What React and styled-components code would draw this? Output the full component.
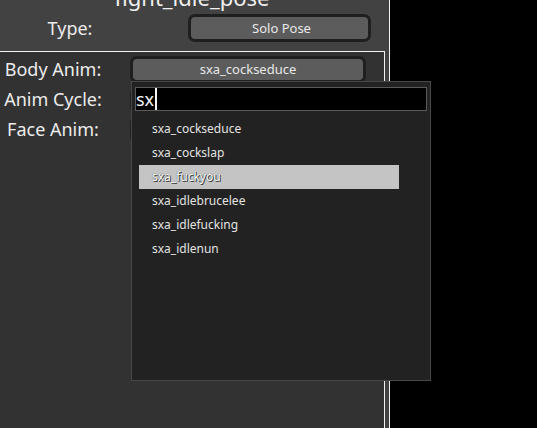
import React from 'react';
import styled, { createGlobalStyle } from 'styled-components';

const Global = createGlobalStyle`
  html, body { margin: 0; padding: 0; background: #000; overflow: hidden; }
  body { font-family: "Noto Sans", "Open Sans", sans-serif; }
`;

const items = [
  'sxa_cockseduce',
  'sxa_cockslap',
  'sxa_fuckyou',
  'sxa_idlebrucelee',
  'sxa_idlefucking',
  'sxa_idlenun',
];
const selectedIndex = 2;

const Page = styled.div`
  position: relative;
  display: flex;
  width: 537px;
  height: 428px;
  background: #000;
  overflow: hidden;
`;

const Panel = styled.div`
  display: flex;
  flex-direction: column;
  width: 389px;
  height: 100%;
  background: #424242;
  border-right: 1px solid #f2f2f2;
`;

const Header = styled.div`
  height: 51px;
  display: flex;
  flex-direction: column;
`;

const Title = styled.div`
  width: 384px;
  height: 14px;
  margin-top: -10px;
  line-height: 14px;
  font-size: 22px;
  color: #f0f0f0;
  text-align: center;
`;

const TypeRow = styled.div`
  display: grid;
  grid-template-columns: 140px 183px;
  column-gap: 48px;
  align-items: center;
  height: 28px;
  margin-top: 10px;
`;

const Label = styled.div`
  font-size: 18px;
  color: #ececec;
  text-align: center;
  line-height: 28px;
`;

const Pill = styled.div`
  box-sizing: border-box;
  height: ${p => p.h || 27}px;
  border: 3px solid #1f1f1f;
  border-radius: 7px;
  background: #5c5c5c;
  color: #e8e8e8;
  font-size: 13px;
  display: flex;
  align-items: center;
  justify-content: center;
  padding-left: ${p => p.shift || 0}px;
`;

const Section = styled.div`
  flex: 1;
  width: 384px;
  background: #323232;
  border-top: 1px solid #f2f2f2;
  border-right: 1px solid #f2f2f2;
  padding-top: 3px;
  display: flex;
  flex-direction: column;
  gap: 3px;
`;

const FieldRow = styled.div`
  display: grid;
  grid-template-columns: 106px 236px;
  column-gap: 24px;
  align-items: center;
  height: 27px;
`;

const Popup = styled.div`
  position: absolute;
  left: 131px;
  top: 81px;
  box-sizing: border-box;
  width: 300px;
  height: 300px;
  background: #222222;
  border: 1px solid #474747;
  padding: 5px 3px 0 3px;
`;

const Search = styled.div`
  box-sizing: border-box;
  width: 292px;
  height: 24px;
  background: #000;
  border: 1px solid #5a5a5a;
  display: flex;
  align-items: center;
  color: #f4f4f4;
  font-size: 18px;
  line-height: 22px;
`;

const Caret = styled.span`
  display: inline-block;
  width: 2px;
  height: 22px;
  margin-left: 1px;
  background: #f4f4f4;
`;

const List = styled.div`
  margin-top: 6px;
  margin-left: 4px;
  display: flex;
  flex-direction: column;
`;

const Item = styled.div`
  width: 260px;
  height: 24px;
  box-sizing: border-box;
  padding-left: 13px;
  line-height: 24px;
  font-size: 12px;
  color: ${p => (p.active ? '#ffffff' : '#e2e2e2')};
  background: ${p => (p.active ? '#c4c4c4' : 'transparent')};
  text-shadow: ${p => (p.active ? '1px 1px 0 #3c3c3c, 0 0 1px #333' : 'none')};
`;

const App = () => {
  return (
    <Page>
      <Global />
      <Panel>
        <Header>
          <Title>fight_idle_pose</Title>
          <TypeRow>
            <Label>Type:</Label>
            <Pill h={28} shift={4}>Solo Pose</Pill>
          </TypeRow>
        </Header>
        <Section>
          <FieldRow>
            <Label>Body Anim:</Label>
            <Pill>sxa_cockseduce</Pill>
          </FieldRow>
          <FieldRow>
            <Label>Anim Cycle:</Label>
            <Pill />
          </FieldRow>
          <FieldRow>
            <Label>Face Anim:</Label>
            <Pill />
          </FieldRow>
        </Section>
      </Panel>
      <Popup>
        <Search>
          sx<Caret />
        </Search>
        <List>
          {items.map((name, i) => (
            <Item key={name} active={i === selectedIndex}>{name}</Item>
          ))}
        </List>
      </Popup>
    </Page>
  );
};

export default App;
